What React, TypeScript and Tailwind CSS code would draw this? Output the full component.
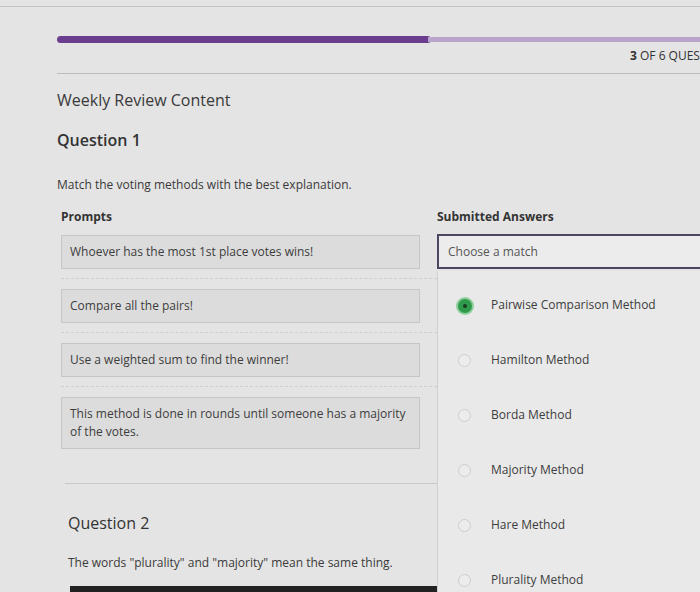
import React from 'react';

const prompts = [
  'Whoever has the most 1st place votes wins!',
  'Compare all the pairs!',
  'Use a weighted sum to find the winner!',
  'This method is done in rounds until someone has a majority of the votes.',
];

const options = [
  'Pairwise Comparison Method',
  'Hamilton Method',
  'Borda Method',
  'Majority Method',
  'Hare Method',
  'Plurality Method',
];

function Radio({ checked }: { checked: boolean }) {
  if (checked) {
    return (
      <span className="flex h-[14px] w-[14px] items-center justify-center rounded-full bg-[#2f9a4a] shadow-[0_0_0_2px_#8fcf9e]">
        <span className="h-[4px] w-[4px] rounded-full bg-[#1c3a22]" />
      </span>
    );
  }
  return <span className="h-[13px] w-[13px] rounded-full border border-[#cdcdcd] bg-[#ececec]" />;
}

export default function App() {
  return (
    <div
      className="relative h-[592px] w-[700px] overflow-hidden bg-[#e4e4e4] text-[#3a3a3a]"
      style={{ fontFamily: '"Open Sans", "Noto Sans", sans-serif' }}
    >
      <div className="mt-[6px] h-px w-full bg-[#c4c4c4]" />
      <div className="pl-[57px]">
        {/* progress */}
        <div className="mt-[29px] flex h-[7px] w-full">
          <div className="h-full w-[374px] rounded-l-full rounded-r-full bg-[#6a3d8e]" />
          <div className="-ml-[3px] h-[5px] flex-1 self-center bg-[#b9a5c9]" />
        </div>
        <div className="mt-[5px] flex justify-end whitespace-nowrap text-[12px] leading-[16px] text-[#333]">
          <span className="-mr-[12px] w-[82px] overflow-hidden">
            <b>3</b> OF 6 QUES
          </span>
        </div>
        <div className="mt-[9px] h-px w-full bg-[#bdbdbd]" />

        <h1 className="mt-[14px] text-[16px] leading-[24px] text-[#3a3a3a]">Weekly Review Content</h1>
        <h2 className="mt-[16px] text-[16px] font-semibold leading-[24px] text-[#333]">Question 1</h2>
        <p className="mt-[24px] text-[12px] leading-[18px] text-[#3a3a3a]">
          Match the voting methods with the best explanation.
        </p>

        <div className="mt-[14px] flex">
          {/* left column */}
          <div className="w-[380px] pl-[4px]">
            <div className="text-[12px] font-bold leading-[18px] text-[#333]">Prompts</div>
            <div className="mt-[9px] flex flex-col">
              {prompts.map((p, i) => (
                <div
                  key={p}
                  className={i < prompts.length - 1 ? 'mb-[10px] border-b border-dashed border-[#cfcfcf] pb-[9px]' : ''}
                >
                  <div className="mr-[17px] border border-[#c6c6c6] bg-[#dcdcdc] px-[8px] py-[7px] text-[12px] leading-[18px] text-[#3d3d3d]">
                    {p}
                  </div>
                </div>
              ))}
            </div>
            <div className="mt-[34px] ml-[4px] h-px bg-[#c8c8c8]" />
            <h2 className="mt-[28px] ml-[7px] text-[16px] font-medium leading-[22px] text-[#333]">Question 2</h2>
            <p className="mt-[20px] ml-[7px] text-[12px] leading-[18px] text-[#3a3a3a]">
              The words "plurality" and "majority" mean the same thing.
            </p>
            <div className="mt-[14px] ml-[9px] h-[6px] bg-[#222]" />
          </div>

          {/* right column */}
          <div className="relative flex-1">
            <div className="text-[12px] font-bold leading-[18px] text-[#333]">Submitted Answers</div>
            <div className="mt-[8px] flex h-[35px] items-center border-2 border-r-0 border-[#4e4660] bg-[#ececec] px-[9px] text-[12px] text-[#555]">
              Choose a match
            </div>
            <div className="absolute left-0 right-0 top-[63px] h-[400px] border-l border-[#d0d0d0] bg-[#e9e9e9]">
              <ul className="pt-[25px]">
                {options.map((o, i) => (
                  <li key={o} className="flex h-[55px] items-start">
                    <span className="flex w-[53px] justify-center pt-[3px]">
                      <Radio checked={i === 0} />
                    </span>
                    <span className="text-[12px] leading-[18px] text-[#3d3d3d]">{o}</span>
                  </li>
                ))}
              </ul>
            </div>
          </div>
        </div>
      </div>
    </div>
  );
}
